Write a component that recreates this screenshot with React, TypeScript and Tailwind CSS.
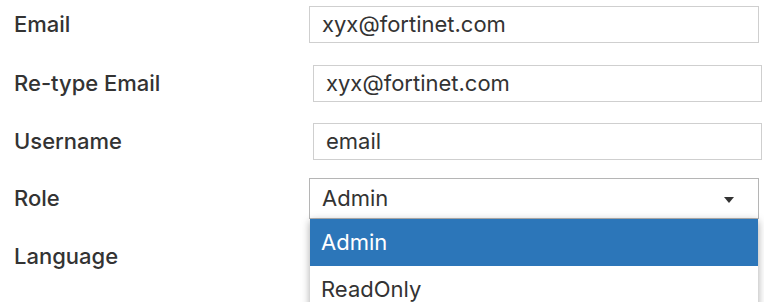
import React from "react";

export default function App() {
  const font = { fontFamily: "Inter, 'Noto Sans', sans-serif" };
  return (
    <div className="w-[764px] h-[302px] overflow-hidden bg-white text-[#333]" style={font}>
      <div className="flex h-[37px] mt-[6px] items-center">
        <div className="w-[309px] pl-[14px] text-[22px] font-medium">Email</div>
        <div className="w-[450px] h-[37px] border border-[#cfcfcf] flex items-center pl-[12px] text-[22px]">xyx@fortinet.com</div>
      </div>
      <div className="flex h-[37px] mt-[22px] items-center">
        <div className="w-[313px] pl-[14px] text-[22px] font-medium">Re-type Email</div>
        <div className="w-[449px] h-[37px] border border-[#cfcfcf] flex items-center pl-[12px] text-[22px]">xyx@fortinet.com</div>
      </div>
      <div className="flex h-[37px] mt-[21px] items-center">
        <div className="w-[313px] pl-[14px] text-[22px] font-medium">Username</div>
        <div className="w-[449px] h-[37px] border border-[#cfcfcf] flex items-center pl-[12px] text-[22px]">email</div>
      </div>
      <div className="flex h-[41px] mt-[18px] items-center">
        <div className="w-[309px] pl-[14px] text-[22px] font-medium">Role</div>
        <div className="relative w-[450px] h-[41px]">
          <div className="h-[41px] border border-[#b5b5b5] flex items-center pl-[12px] pr-[24px] text-[22px] justify-between">
            <span>Admin</span>
            <svg width="10" height="6" viewBox="0 0 10 6" className="mt-[2px]">
              <path d="M0 0 L10 0 L5 6 Z" fill="#333" />
            </svg>
          </div>
          <div className="absolute left-[1px] right-[1px] top-[41px] bg-white shadow-[0_2px_8px_rgba(0,0,0,0.35)] text-[22px] z-10">
            <div className="h-[47px] bg-[#2c76b9] text-white flex items-center pl-[11px]">Admin</div>
            <div className="h-[47px] flex items-center pl-[11px] text-[#333]">ReadOnly</div>
          </div>
        </div>
      </div>
      <div className="flex h-[38px] mt-[18px] items-center">
        <div className="w-[309px] pl-[14px] text-[22px] font-medium">Language</div>
      </div>
    </div>
  );
}
